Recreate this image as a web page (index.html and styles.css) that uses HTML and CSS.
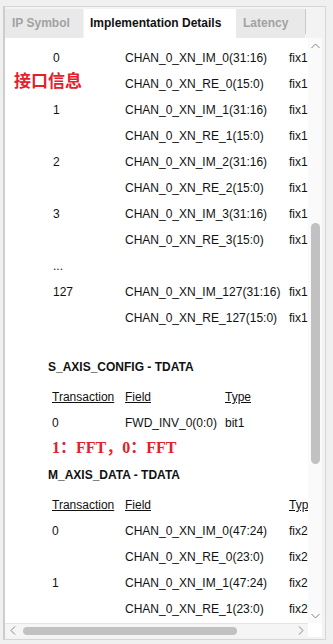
FILE: index.html
```html
<!DOCTYPE html>
<html lang="en">
<head>
    <meta charset="UTF-8">
    <meta name="viewport" content="width=device-width, initial-scale=1.0">
    <title>Implementation Details</title>
    <link rel="stylesheet" href="styles.css">
</head>
<body>
    <div class="panel">
        <div class="tabs">
            <div class="tab tab-ip">IP Symbol</div>
            <div class="tab tab-active">Implementation Details</div>
            <div class="tab tab-latency">Latency</div>
            <div class="tab-sep"></div>
        </div>

        <div class="main">
            <div class="content">
                <div class="note note-iface">接口信息</div>

                <div class="grid grid-data grid-top">
                    <span>0</span><span>CHAN_0_XN_IM_0(31:16)</span><span>fix16_15</span>
                    <span></span><span>CHAN_0_XN_RE_0(15:0)</span><span>fix16_15</span>
                    <span>1</span><span>CHAN_0_XN_IM_1(31:16)</span><span>fix16_15</span>
                    <span></span><span>CHAN_0_XN_RE_1(15:0)</span><span>fix16_15</span>
                    <span>2</span><span>CHAN_0_XN_IM_2(31:16)</span><span>fix16_15</span>
                    <span></span><span>CHAN_0_XN_RE_2(15:0)</span><span>fix16_15</span>
                    <span>3</span><span>CHAN_0_XN_IM_3(31:16)</span><span>fix16_15</span>
                    <span></span><span>CHAN_0_XN_RE_3(15:0)</span><span>fix16_15</span>
                    <span>...</span><span></span><span></span>
                    <span>127</span><span>CHAN_0_XN_IM_127(31:16)</span><span>fix16_15</span>
                    <span></span><span>CHAN_0_XN_RE_127(15:0)</span><span>fix16_15</span>
                </div>

                <h3 class="section-title section-config">S_AXIS_CONFIG - TDATA</h3>
                <div class="grid grid-config">
                    <span class="th">Transaction</span><span class="th">Field</span><span class="th">Type</span>
                    <span>0</span><span>FWD_INV_0(0:0)</span><span>bit1</span>
                </div>
                <div class="note note-fft">1：FFT，0：FFT</div>

                <h3 class="section-title section-data">M_AXIS_DATA - TDATA</h3>
                <div class="grid grid-data">
                    <span class="th">Transaction</span><span class="th">Field</span><span class="th">Type</span>
                    <span>0</span><span>CHAN_0_XN_IM_0(47:24)</span><span>fix24_23</span>
                    <span></span><span>CHAN_0_XN_RE_0(23:0)</span><span>fix24_23</span>
                    <span>1</span><span>CHAN_0_XN_IM_1(47:24)</span><span>fix24_23</span>
                    <span></span><span>CHAN_0_XN_RE_1(23:0)</span><span>fix24_23</span>
                </div>
            </div>

            <div class="vscroll">
                <div class="arrow arrow-v">
                    <svg width="9" height="6" viewBox="0 0 9 6"><polyline points="0.5,5 4.5,1 8.5,5" fill="none" stroke="#858585" stroke-width="1"/></svg>
                </div>
                <div class="vthumb"></div>
                <div class="vfill"></div>
                <div class="arrow arrow-v">
                    <svg width="9" height="6" viewBox="0 0 9 6"><polyline points="0.5,1 4.5,5 8.5,1" fill="none" stroke="#858585" stroke-width="1"/></svg>
                </div>
            </div>
        </div>

        <div class="bottom">
            <div class="hscroll">
                <div class="arrow arrow-h">
                    <svg width="6" height="9" viewBox="0 0 6 9"><polyline points="5,0.5 1,4.5 5,8.5" fill="none" stroke="#858585" stroke-width="1"/></svg>
                </div>
                <div class="hthumb"></div>
                <div class="hfill"></div>
                <div class="arrow arrow-h">
                    <svg width="6" height="9" viewBox="0 0 6 9"><polyline points="1,0.5 5,4.5 1,8.5" fill="none" stroke="#858585" stroke-width="1"/></svg>
                </div>
            </div>
            <div class="corner"></div>
        </div>
    </div>
</body>
</html>
```

FILE: styles.css
```css
body {
    margin: 0;
    background-color: #f0f0f0;
    font-family: "Liberation Sans", Arial, sans-serif;
    font-size: 12px;
    color: #111;
}
.panel {
    margin: 6px 0 0 3px;
    width: 323px;
    height: 634px;
    box-sizing: border-box;
    border: 1px solid #d6d6d6;
    border-left: 2px solid #cdcdcd;
    background-color: #f3f3f3;
    display: flex;
    flex-direction: column;
}
.tabs {
    display: flex;
    align-items: flex-start;
    margin-top: 2px;
    height: 29px;
}
.tab {
    box-sizing: border-box;
    height: 29px;
    line-height: 28px;
    padding-left: 7px;
    font-weight: bold;
    color: #a2a2a2;
    background-color: #e9e9e9;
    white-space: nowrap;
}
.tab-ip {
    width: 78px;
    margin-right: 1px;
}
.tab-active {
    width: 152px;
    padding-left: 6px;
    color: #111;
    background-color: #fff;
}
.tab-latency {
    width: 69px;
}
.tab-sep {
    width: 1px;
    height: 25px;
    background-color: #c9c9c9;
}
.main {
    flex: 1;
    display: flex;
    min-height: 0;
    margin-right: 3px;
}
.content {
    flex: 1;
    position: relative;
    overflow: hidden;
    background-color: #fff;
    padding-top: 7px;
}
.grid {
    display: grid;
    grid-auto-rows: 26px;
    align-items: center;
    white-space: nowrap;
    padding-left: 47px;
}
.grid-data {
    grid-template-columns: 73px 164px auto;
}
.grid-top {
    padding-left: 48px;
    grid-template-columns: 72px 164px auto;
}
.grid-config {
    grid-template-columns: 73px 100px auto;
}
.th {
    text-decoration: underline;
}
.section-title {
    margin: 0;
    padding-left: 43px;
    font-size: 12px;
    font-weight: bold;
    line-height: 26px;
}
.section-config {
    margin-top: 23px;
    margin-bottom: 4px;
}
.section-data {
    margin-bottom: 4px;
}
.note {
    color: #e3202b;
    font-weight: bold;
    white-space: nowrap;
}
.note-iface {
    position: absolute;
    left: 9px;
    top: 30px;
    font-family: "Noto Sans CJK SC", sans-serif;
    font-size: 17px;
    line-height: 24px;
}
.note-fft {
    padding-left: 47px;
    height: 26px;
    line-height: 24px;
    font-family: "Liberation Serif", "Noto Sans CJK SC", serif;
    font-size: 16px;
}
.vscroll {
    width: 14px;
    display: flex;
    flex-direction: column;
    align-items: center;
    background-color: #fafafa;
}
.arrow {
    display: flex;
    align-items: center;
    justify-content: center;
}
.arrow-v {
    width: 14px;
    height: 15px;
}
.vthumb {
    margin-top: 170px;
    width: 9px;
    height: 241px;
    border-radius: 5px;
    background-color: #c1c1c1;
}
.vfill {
    flex: 1;
}
.bottom {
    display: flex;
    height: 14px;
    margin: 0 3px 2px 0;
}
.hscroll {
    flex: 1;
    display: flex;
    align-items: center;
    box-sizing: border-box;
    border-top: 1px solid #e4e4e4;
    background-color: #f5f5f5;
}
.arrow-h {
    width: 15px;
    height: 13px;
}
.hthumb {
    margin-left: 3px;
    width: 214px;
    height: 8px;
    border-radius: 4px;
    background-color: #c1c1c1;
}
.hfill {
    flex: 1;
}
.corner {
    width: 14px;
    background-color: #fff;
}
```
